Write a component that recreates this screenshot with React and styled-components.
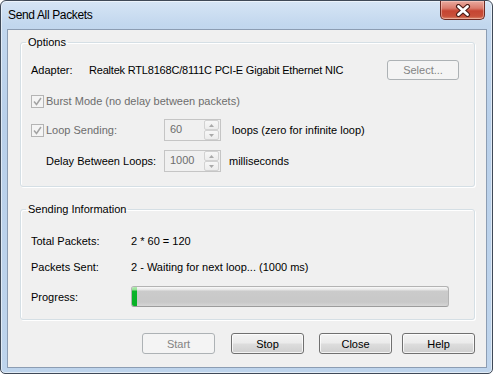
import styled, { createGlobalStyle } from "styled-components";

const GlobalStyle = createGlobalStyle`
  html, body {
    margin: 0;
    padding: 0;
    background: #ffffff;
  }
  body {
    font-family: "Liberation Sans", Arial, sans-serif;
    font-size: 11px;
    color: #000;
  }
`

const info = {
    adapter: "Realtek RTL8168C/8111C PCI-E Gigabit Ethernet NIC",
    loops: 60,
    delay: 1000,
    perLoop: 2,
    sent: 2,
}

const CloseGlyph = () => (
    <svg width="16" height="13" viewBox="0 0 16 13">
        <path d="M3.5 2.5 L12.5 10.5 M12.5 2.5 L3.5 10.5" stroke="#4a1c16" strokeWidth="5" strokeLinecap="round" fill="none" />
        <path d="M3.5 2.5 L12.5 10.5 M12.5 2.5 L3.5 10.5" stroke="#ffffff" strokeWidth="2.8" strokeLinecap="round" fill="none" />
    </svg>
)

const CheckMark = () => (
    <svg width="9" height="9" viewBox="0 0 9 9">
        <path d="M1 4.5 L3.5 7.5 L8 1" stroke="#a3a3a3" strokeWidth="1.5" fill="none" />
    </svg>
)

const Arrow = ({ up }) => (
    <svg width="5" height="3" viewBox="0 0 5 3">
        <path d={up ? "M0 3 L2.5 0 L5 3 Z" : "M0 0 L2.5 3 L5 0 Z"} fill="#a9a9a9" />
    </svg>
)

const Spin = ({ value }) => (
    <SpinBox>
        <SpinText>{value}</SpinText>
        <SpinButtons>
            <SpinButton><Arrow up /></SpinButton>
            <SpinButton><Arrow /></SpinButton>
        </SpinButtons>
    </SpinBox>
)

export default function App() {
    const total = info.perLoop * info.loops
    const percent = (info.sent / total) * 100

    return (
        <>
            <GlobalStyle />
            <Window>
                <TitleBar>
                    <Title>Send All Packets</Title>
                    <CloseButton><CloseGlyph /></CloseButton>
                </TitleBar>
                <Client>
                    <Group $height={152}>
                        <Legend>Options</Legend>
                        <Row $height={20}>
                            <Label $width={58}>Adapter:</Label>
                            <Value $tight>{info.adapter}</Value>
                            <Button $ml="auto" $width={72} $height={20} disabled>Select...</Button>
                        </Row>
                        <Row $height={20} $top={11}>
                            <CheckBox><CheckMark /></CheckBox>
                            <Label $muted>Burst Mode (no delay between packets)</Label>
                        </Row>
                        <Row $height={22} $top={8}>
                            <CheckField>
                                <CheckBox><CheckMark /></CheckBox>
                                <Label $muted>Loop Sending:</Label>
                            </CheckField>
                            <Spin value={info.loops} />
                            <Suffix $gap={11}>loops (zero for infinite loop)</Suffix>
                        </Row>
                        <Row $height={22} $top={9} $indent={15}>
                            <Label $width={118}>Delay Between Loops:</Label>
                            <Spin value={info.delay} />
                            <Suffix $gap={8}>milliseconds</Suffix>
                        </Row>
                    </Group>

                    <Group $height={118} $top={15} $padTop={15}>
                        <Legend>Sending Information</Legend>
                        <Row $height={20}>
                            <Label $width={100}>Total Packets:</Label>
                            <Value>{info.perLoop} * {info.loops} = {total}</Value>
                        </Row>
                        <Row $height={20} $top={6}>
                            <Label $width={100}>Packets Sent:</Label>
                            <Value>{info.sent} - Waiting for next loop... ({info.delay} ms)</Value>
                        </Row>
                        <Row $height={21} $top={9}>
                            <Label $width={100}>Progress:</Label>
                            <Track>
                                <Fill style={{ width: `${percent}%` }} />
                            </Track>
                        </Row>
                    </Group>

                    <ButtonBar>
                        <Button disabled>Start</Button>
                        <Button>Stop</Button>
                        <Button $ml={15}>Close</Button>
                        <Button $ml={10}>Help</Button>
                    </ButtonBar>
                </Client>
            </Window>
        </>
    )
}

//Styles

const Window = styled.div`
    width: 493px;
    height: 374px;
    box-sizing: border-box;
    border: 1px solid #3f4957;
    border-radius: 6px 6px 5px 5px;
    padding: 0 5px 5px 6px;
    display: flex;
    flex-direction: column;
    background: linear-gradient(180deg, #d6e5f5 0px, #c2d7ee 24px, #b9d0ea 120px, #bed4ec 100%);
    box-shadow: inset 0 0 0 1px rgba(255, 255, 255, 0.55);
`

const TitleBar = styled.div`
    height: 28px;
    flex: none;
    display: flex;
    align-items: flex-start;
`

const Title = styled.div`
    font-size: 12px;
    letter-spacing: -0.35px;
    line-height: 14px;
    margin-top: 7px;
    padding-left: 1px;
    color: #000;
`

const CloseButton = styled.div`
    margin-left: auto;
    margin-right: 2px;
    width: 45px;
    height: 19px;
    box-sizing: border-box;
    border: 1px solid #6d2a22;
    border-top: none;
    border-radius: 0 0 5px 5px;
    display: flex;
    align-items: center;
    justify-content: center;
    background: linear-gradient(180deg, #e9aa9f 0%, #da7b6c 40%, #c64532 55%, #c8503a 85%, #dd8a6e 100%);
    box-shadow: inset 0 0 0 1px rgba(255, 220, 210, 0.45);
`

const Client = styled.div`
    flex: 1;
    border: 1px solid #8c9db3;
    background: #f0f0f0;
    padding: 5px 11px 0 12px;
    display: flex;
    flex-direction: column;
`

const Group = styled.fieldset`
    margin: ${p => p.$top || 0}px 0 0 0;
    height: ${p => p.$height}px;
    box-sizing: border-box;
    border: 1px solid #d5dfe5;
    border-radius: 3px;
    box-shadow: inset 1px 1px 0 #ffffff, 1px 1px 0 #ffffff;
    padding: ${p => p.$padTop ?? 11}px 15px 0 10px;
    min-inline-size: 0;
`

const Legend = styled.legend`
    padding: 0 2px;
    margin-left: -5px;
    line-height: 14px;
    color: #000;
`

const Row = styled.div`
    display: flex;
    align-items: center;
    height: ${p => p.$height}px;
    margin-top: ${p => p.$top || 0}px;
    padding-left: ${p => p.$indent || 0}px;
    white-space: nowrap;
`

const Label = styled.span`
    flex: none;
    width: ${p => (p.$width ? `${p.$width}px` : "auto")};
    color: ${p => (p.$muted ? "#6d6d6d" : "#000")};
`

const Value = styled.span`
    letter-spacing: ${p => (p.$tight ? "-0.2px" : "0")};
`

const CheckField = styled.div`
    display: flex;
    align-items: center;
    width: 133px;
    flex: none;
`

const CheckBox = styled.span`
    width: 13px;
    height: 13px;
    box-sizing: border-box;
    flex: none;
    margin-right: 2px;
    border: 1px solid #b4b4b4;
    background: #f4f4f4;
    display: flex;
    align-items: center;
    justify-content: center;
`

const SpinBox = styled.div`
    width: 57px;
    height: 22px;
    box-sizing: border-box;
    flex: none;
    border: 1px solid #c5c5c5;
    background: #f0f0f0;
    display: flex;
    align-items: stretch;
    padding: 0 1px 0 5px;
`

const SpinText = styled.span`
    flex: 1;
    color: #6d6d6d;
    line-height: 18px;
`

const SpinButtons = styled.div`
    width: 15px;
    display: flex;
    flex-direction: column;
`

const SpinButton = styled.span`
    flex: 1;
    box-sizing: border-box;
    border: 1px solid #d2d2d2;
    border-radius: 2px;
    background: linear-gradient(180deg, #f7f7f7, #ececec);
    display: flex;
    align-items: center;
    justify-content: center;
`

const Suffix = styled.span`
    margin-left: ${p => p.$gap}px;
`

const Track = styled.div`
    width: 318px;
    height: 21px;
    box-sizing: border-box;
    border: 1px solid #b3b3b3;
    border-bottom-color: #9c9c9c;
    border-radius: 3px;
    overflow: hidden;
    display: flex;
    background: linear-gradient(180deg, #f9f9f9 0px, #e4e4e4 3px, #cbcbcb 4px, #c8c8c8 15px, #d6d6d6 19px);
`

const Fill = styled.div`
    background: linear-gradient(180deg, #b2ecb2 0px, #8fde8f 3px, #0bb42a 4px, #06b025 100%);
`

const ButtonBar = styled.div`
    display: flex;
    justify-content: flex-end;
    margin-top: 13px;
`

const Button = styled.button`
    width: ${p => p.$width || 73}px;
    height: ${p => p.$height || 21}px;
    box-sizing: border-box;
    flex: none;
    margin-left: ${p => (p.$ml === "auto" ? "auto" : `${p.$ml ?? 16}px`)};
    padding: 0;
    border: 1px solid #707070;
    border-radius: 3px;
    background: linear-gradient(180deg, #f3f3f3 0%, #ebebeb 48%, #dddddd 52%, #cfcfcf 100%);
    box-shadow: inset 0 0 0 1px rgba(255, 255, 255, 0.75);
    font-family: "Liberation Sans", Arial, sans-serif;
    font-size: 11px;
    color: #000;

    &:disabled {
        border-color: #adb2b5;
        background: #f4f4f4;
        box-shadow: none;
        color: #838383;
    }
`
